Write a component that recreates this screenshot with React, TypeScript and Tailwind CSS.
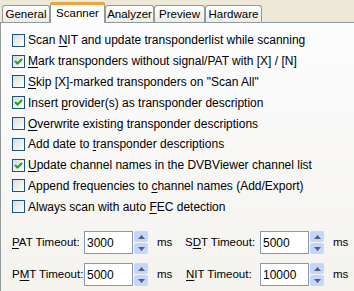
import React from 'react';

const font = { fontFamily: '"Liberation Sans", Arial, sans-serif' };

const Tab = ({ label, active, w }: { label: string; active?: boolean; w: string }) => (
  <div
    className={
      (active
        ? 'relative z-10 -mb-px flex h-[21px] items-start justify-center rounded-t-[3px] border border-b-0 border-[#919b9c] bg-white pt-[3px] '
        : 'flex h-[17px] items-center justify-center rounded-t-[3px] border border-b-0 border-[#919b9c] bg-gradient-to-b from-white to-[#ecebe5] ') + w
    }
  >
    {active && <div className="absolute -top-px left-[-1px] right-[-1px] h-[3px] rounded-t-[3px] bg-[#f1a33b]" />}
    <span className="whitespace-nowrap text-[11.5px] leading-[15px] text-black">{label}</span>
  </div>
);

const Check = ({ checked }: { checked?: boolean }) => (
  <div className="flex h-[13px] w-[13px] shrink-0 items-center justify-center border border-[#1c5180] bg-gradient-to-br from-[#dcdcd5] to-white">
    {checked && (
      <svg width="9" height="9" viewBox="0 0 9 9">
        <path d="M1 4 L3.5 6.5 L8 2" stroke="#21a121" strokeWidth="2" fill="none" />
      </svg>
    )}
  </div>
);

const Row = ({ checked, children }: { checked?: boolean; children: React.ReactNode }) => (
  <div className="flex h-[20.8px] items-center gap-[3px]">
    <Check checked={checked} />
    <span className="whitespace-nowrap text-[12px] text-black">{children}</span>
  </div>
);

const U = ({ children }: { children: React.ReactNode }) => <span className="underline underline-offset-2">{children}</span>;

const Spin = ({ value }: { value: string }) => (
  <div className="flex items-center">
    <div className="flex h-[23px] w-[49px] items-center border border-[#7f9db9] bg-white pl-[2px] text-[12px]">{value}</div>
    <div className="ml-[1px] flex h-[23px] w-[14px] flex-col gap-px">
      <div className="flex flex-1 items-center justify-center rounded-[2px] bg-[#c6d6fa]">
        <svg width="7" height="4" viewBox="0 0 7 4"><path d="M0 4 L3.5 0 L7 4 Z" fill="#4d6185" /></svg>
      </div>
      <div className="flex flex-1 items-center justify-center rounded-[2px] bg-[#c6d6fa]">
        <svg width="7" height="4" viewBox="0 0 7 4"><path d="M0 0 L3.5 4 L7 0 Z" fill="#4d6185" /></svg>
      </div>
    </div>
  </div>
);

export default function App() {
  return (
    <div className="flex h-[291px] w-[354px] flex-col overflow-hidden bg-[#ece9d8]" style={font}>
      <div className="flex h-[22px] items-end pl-[2px]">
        <Tab label="General" w="w-[48px]" />
        <Tab label="Scanner" active w="w-[55px]" />
        <Tab label="Analyzer" w="w-[49px]" />
        <Tab label="Preview" w="w-[51px]" />
        <Tab label="Hardware" w="w-[57px]" />
      </div>
      <div className="flex flex-1 flex-col border-l border-t border-[#919b9c] bg-gradient-to-b from-[#fcfcfe] to-[#f4f3ee] pl-[11px] pt-[7px]">
        <Row>Scan <U>N</U>IT and update transponderlist while scanning</Row>
        <Row checked><U>M</U>ark transponders without signal/PAT with [X] / [N]</Row>
        <Row><U>S</U>kip [X]-marked transponders on "Scan All"</Row>
        <Row checked>Insert <U>p</U>rovider(s) as transponder description</Row>
        <Row><U>O</U>verwrite existing transponder descriptions</Row>
        <Row>Add date to <U>t</U>ransponder descriptions</Row>
        <Row checked><U>U</U>pdate channel names in the DVBViewer channel list</Row>
        <Row>Append frequencies to <U>c</U>hannel names (Add/Export)</Row>
        <Row>Always scan with auto <U>F</U>EC detection</Row>
        <div className="mt-[14px] grid grid-cols-[72px_64px_34px_78px_64px_auto] items-center gap-y-[9px] whitespace-nowrap text-[11.5px]">
          <span><U>P</U>AT Timeout:</span>
          <Spin value="3000" />
          <span className="pl-[9px]">ms</span>
          <span className="pl-[3px]">S<U>D</U>T Timeout:</span>
          <Spin value="5000" />
          <span className="pl-[9px]">ms</span>
          <span>P<U>M</U>T Timeout:</span>
          <Spin value="5000" />
          <span className="pl-[9px]">ms</span>
          <span className="pl-[4px]"><U>N</U>IT Timeout:</span>
          <Spin value="10000" />
          <span className="pl-[9px]">ms</span>
        </div>
      </div>
    </div>
  );
}
